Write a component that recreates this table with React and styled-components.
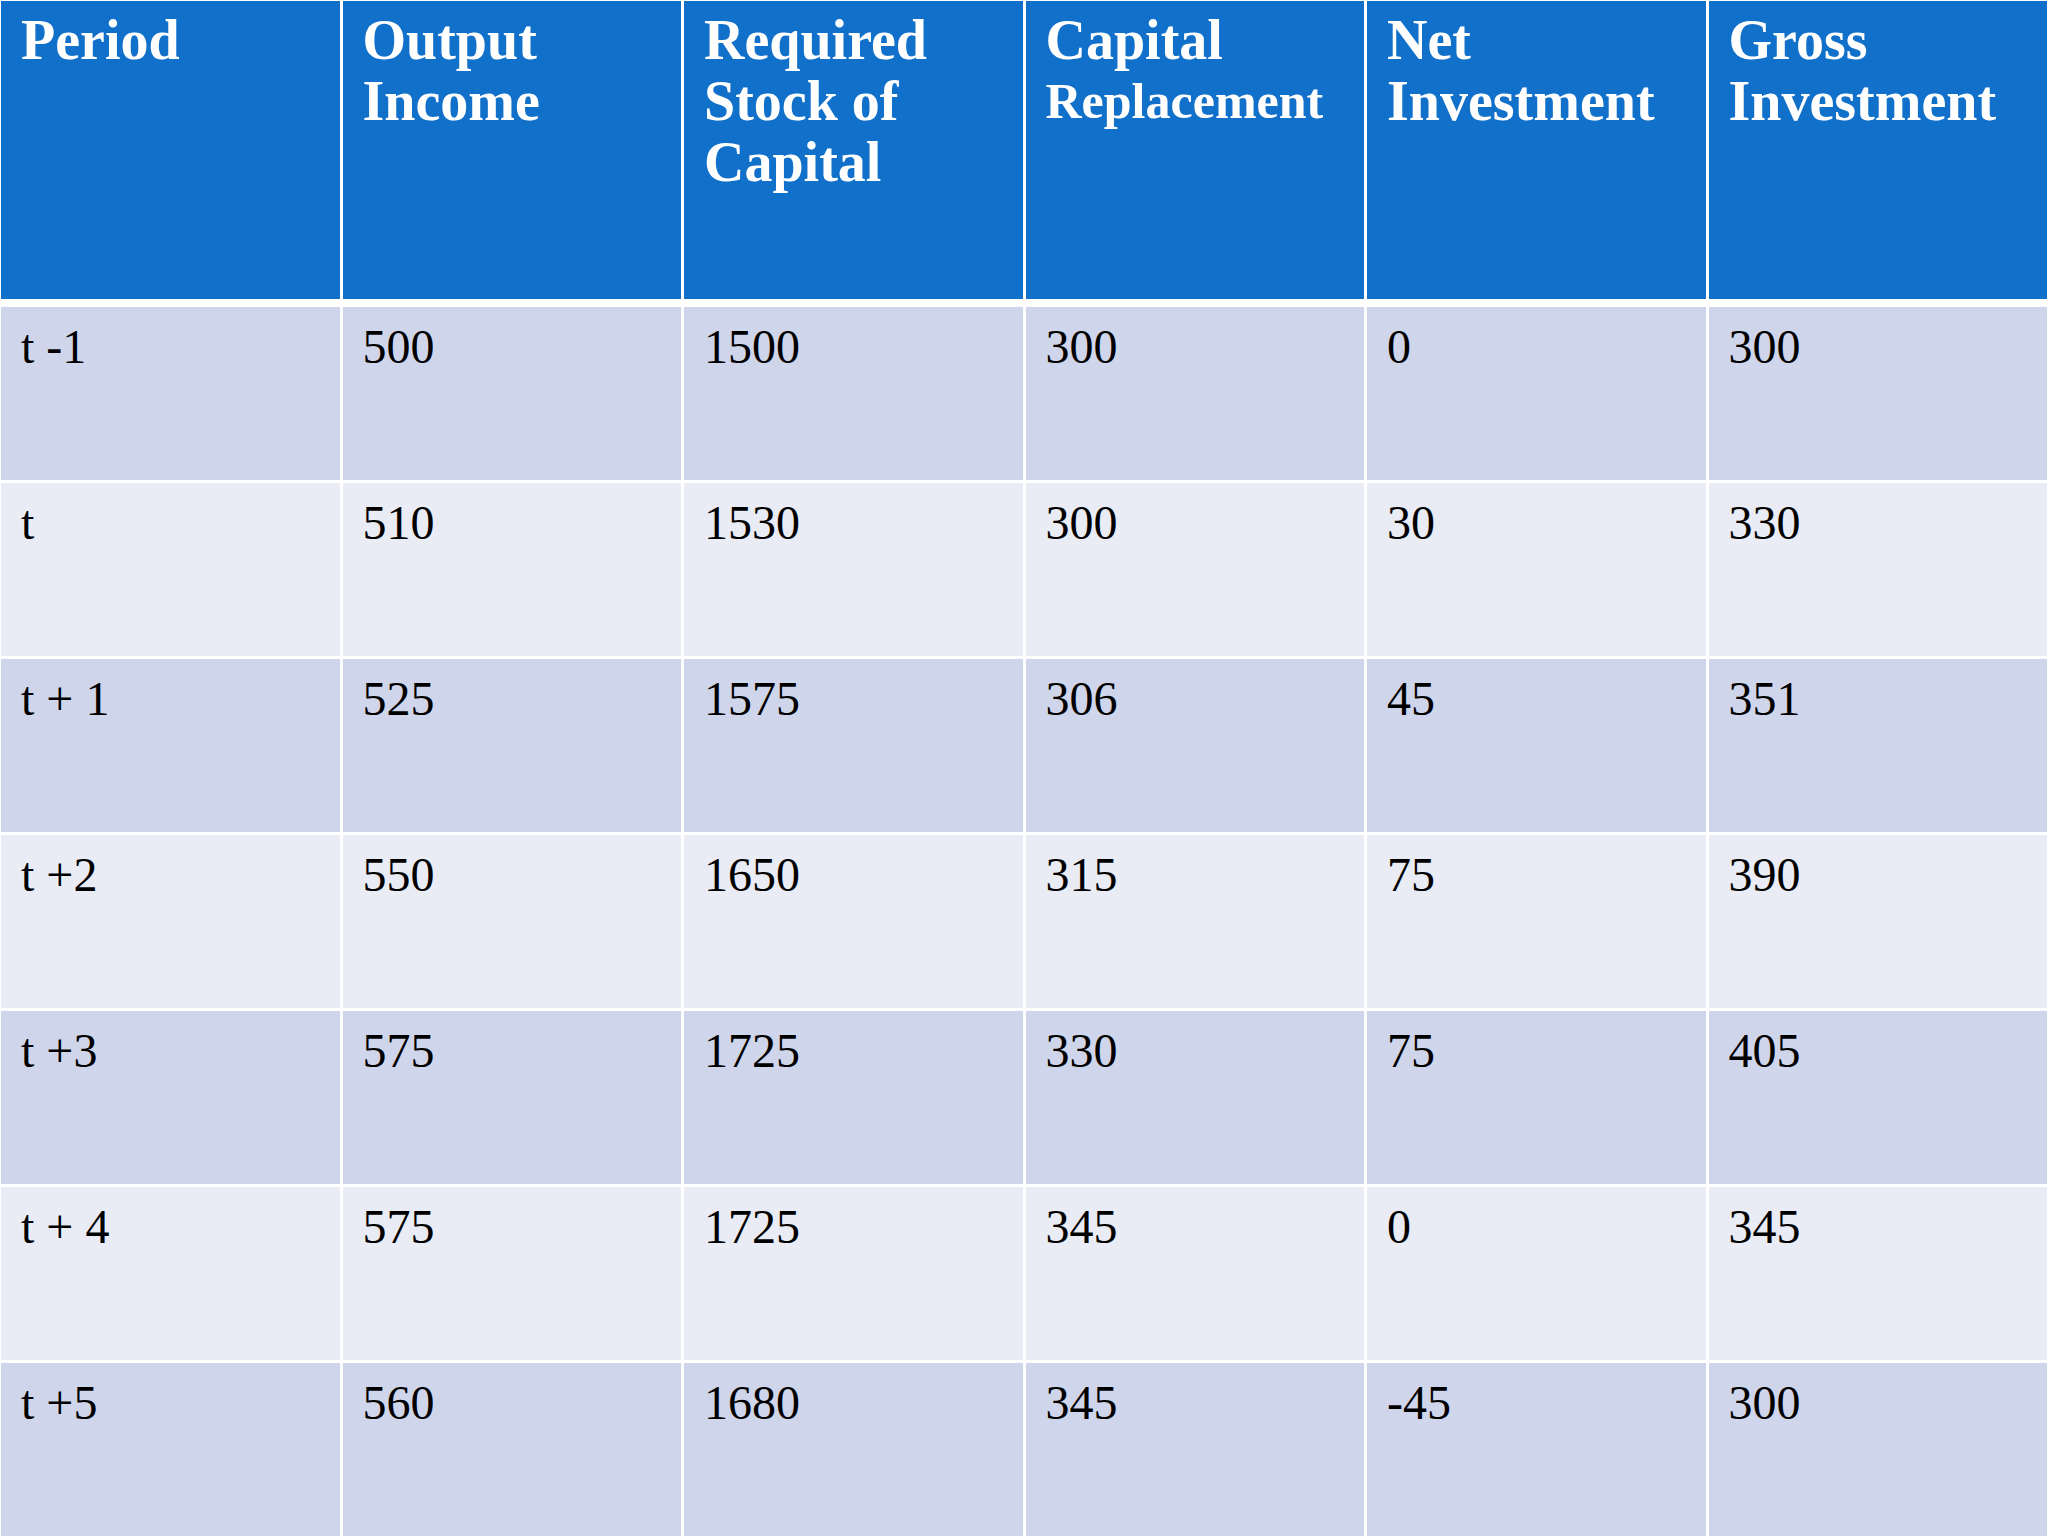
import React from "react";
import styled, { createGlobalStyle } from "styled-components";

const GlobalStyle = createGlobalStyle`
  html, body {
    margin: 0;
    padding: 0;
    background: #ffffff;
  }
  body {
    font-family: "Liberation Serif", "Times New Roman", serif;
  }
`;

const headers = [
    ["Period"],
    ["Output", "Income"],
    ["Required", "Stock of", "Capital"],
    ["Capital", { text: "Replacement", small: true }],
    ["Net", "Investment"],
    ["Gross", "Investment"],
];

const rows = [
    ["t -1", "500", "1500", "300", "0", "300"],
    ["t", "510", "1530", "300", "30", "330"],
    ["t + 1", "525", "1575", "306", "45", "351"],
    ["t +2", "550", "1650", "315", "75", "390"],
    ["t +3", "575", "1725", "330", "75", "405"],
    ["t + 4", "575", "1725", "345", "0", "345"],
    ["t +5", "560", "1680", "345", "-45", "300"],
];

const Table = styled.div`
  display: flex;
  flex-direction: column;
  width: 2048px;
  height: 1536px;
  box-sizing: border-box;
  padding: 1px 1px 0 1px;
  background: #ffffff;
  overflow: hidden;
`;

const HeaderRow = styled.div`
  display: grid;
  grid-template-columns: repeat(6, 1fr);
  column-gap: 3px;
  height: 298px;
  margin-bottom: 8px;
`;

const Body = styled.div`
  display: grid;
  grid-template-rows: repeat(7, 173px);
  row-gap: 3px;
`;

const Row = styled.div`
  display: grid;
  grid-template-columns: repeat(6, 1fr);
  column-gap: 3px;
`;

const HeadCell = styled.div`
  background: #1170c9;
  color: #ffffff;
  font-weight: bold;
  font-size: 56px;
  line-height: 61px;
  padding: 9px 0 0 20px;
  white-space: nowrap;
`;

const HeadLine = styled.div`
  font-size: ${(p) => (p.$small ? "50px" : "inherit")};
`;

const Cell = styled.div`
  background: ${(p) => (p.$band ? "#cfd5ea" : "#e9ebf5")};
  color: #000000;
  font-size: 48px;
  line-height: 58px;
  padding: 11px 0 0 20px;
  white-space: nowrap;
`;

const App = () => {
    return (
        <>
            <GlobalStyle />
            <Table>
                <HeaderRow>
                    {headers.map((lines, i) => (
                        <HeadCell key={i}>
                            {lines.map((line, j) =>
                                typeof line === "string" ? (
                                    <HeadLine key={j}>{line}</HeadLine>
                                ) : (
                                    <HeadLine key={j} $small={line.small}>
                                        {line.text}
                                    </HeadLine>
                                )
                            )}
                        </HeadCell>
                    ))}
                </HeaderRow>
                <Body>
                    {rows.map((row, i) => (
                        <Row key={i}>
                            {row.map((value, j) => (
                                <Cell key={j} $band={i % 2 === 0}>
                                    {value}
                                </Cell>
                            ))}
                        </Row>
                    ))}
                </Body>
            </Table>
        </>
    );
};

export default App;
